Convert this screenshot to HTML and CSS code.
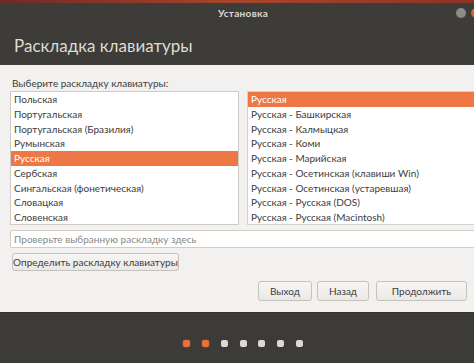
FILE: index.html
```html
<!DOCTYPE html>
<html lang="ru">
<head>
<meta charset="utf-8">
<title>Установка</title>
<link rel="stylesheet" href="styles.css">
</head>
<body>
<div class="desk-strip"></div>
<div class="window">
  <div class="titlebar">
    <div></div>
    <div class="win-title">Установка</div>
    <div class="controls"><span class="ctl ctl-min"></span><span class="ctl ctl-close"></span></div>
  </div>
  <div class="header">Раскладка клавиатуры</div>
  <div class="content">
    <div class="prompt">Выберите раскладку клавиатуры:</div>
    <div class="lists">
      <ul class="list">
        <li>Польская</li>
        <li>Португальская</li>
        <li>Португальская (Бразилия)</li>
        <li>Румынская</li>
        <li class="sel">Русская</li>
        <li>Сербская</li>
        <li>Сингальская (фонетическая)</li>
        <li>Словацкая</li>
        <li>Словенская</li>
      </ul>
      <ul class="list list-right">
        <li class="sel">Русская</li>
        <li>Русская - Башкирская</li>
        <li>Русская - Калмыцкая</li>
        <li>Русская - Коми</li>
        <li>Русская - Марийская</li>
        <li>Русская - Осетинская (клавиши Win)</li>
        <li>Русская - Осетинская (устаревшая)</li>
        <li>Русская - Русская (DOS)</li>
        <li>Русская - Русская (Macintosh)</li>
      </ul>
    </div>
    <input class="test-input" type="text" placeholder="Проверьте выбранную раскладку здесь">
    <div class="detect-row"><button class="btn btn-detect">Определить раскладку клавиатуры</button></div>
    <div class="actions">
      <button class="btn btn-quit">Выход</button>
      <button class="btn btn-back">Назад</button>
      <button class="btn btn-next">Продолжить</button>
    </div>
  </div>
  <div class="footer">
    <span class="dot on"></span><span class="dot on"></span><span class="dot"></span><span class="dot"></span><span class="dot"></span><span class="dot"></span><span class="dot"></span>
  </div>
</div>
</body>
</html>
```
FILE: styles.css
```css
* { box-sizing: border-box; }
html, body { margin: 0; padding: 0; }
body {
  width: 474px;
  height: 363px;
  overflow: hidden;
  font-family: Lato, "Noto Sans", sans-serif;
  font-size: 10px;
  color: #3c3c3c;
  background: #3c3b37;
}
.desk-strip {
  height: 3px;
  background: linear-gradient(90deg, #6e2a25, #a8452c 50%, #8c3326);
}
.window {
  display: flex;
  flex-direction: column;
  height: 360px;
}
.titlebar {
  height: 19px;
  display: grid;
  grid-template-columns: 1fr auto 1fr;
  align-items: center;
  background: #3d3c38;
  padding-left: 12px;
}
.win-title {
  color: #dcd8d0;
  font-weight: bold;
  font-size: 10px;
  letter-spacing: 0.3px;
}
.controls {
  display: flex;
  justify-content: flex-end;
  align-items: center;
  gap: 5px;
  margin-right: -7px;
}
.ctl {
  width: 10px;
  height: 10px;
  border-radius: 50%;
  display: block;
}
.ctl-min { background: #8d8b86; }
.ctl-close { background: #e2602e; }
.header {
  height: 43px;
  background: #3d3c38;
  color: #dedbd4;
  font-size: 17px;
  padding-left: 14px;
  display: flex;
  align-items: center;
  padding-top: 3px;
}
.content {
  height: 247px;
  background: #f2f1f0;
  padding-left: 10px;
  display: flex;
  flex-direction: column;
}
.prompt {
  padding-left: 2px;
  margin-top: 10px;
  height: 16px;
  line-height: 16px;
}
.lists {
  display: grid;
  grid-template-columns: 229px 232px;
  column-gap: 8px;
}
.list {
  list-style: none;
  margin: 0;
  padding: 0;
  height: 134px;
  background: #fff;
  border: 1px solid #cfccc8;
  overflow: hidden;
}
.list li {
  height: 14.75px;
  line-height: 14.75px;
  padding-left: 3px;
  white-space: nowrap;
}
.list li.sel {
  background: #ed7845;
  color: #fff;
}
.list-right { border-color: #d6d3cf; }
.test-input {
  margin-top: 5px;
  width: 470px;
  height: 18px;
  border: 1px solid #d0cdc9;
  border-radius: 2px;
  background: #fff;
  font: inherit;
  padding: 0 0 0 3px;
  color: #3c3c3c;
}
.test-input::placeholder { color: #8a8884; }
.detect-row {
  margin-top: 5px;
  padding-left: 2px;
  display: flex;
}
.btn {
  font: inherit;
  color: #3c3c3c;
  background: linear-gradient(#f7f6f5, #ebe9e6);
  border: 1px solid #c5c1bc;
  border-radius: 3px;
  padding: 0;
}
.btn-detect {
  height: 18px;
  width: 167px;
}
.actions {
  margin-top: 10px;
  display: flex;
  justify-content: flex-end;
  padding-right: 7px;
  gap: 5px;
}
.actions .btn { height: 20px; }
.btn-quit { width: 54px; }
.btn-back { width: 52px; margin-right: 2px; }
.btn-next { width: 91px; }
.footer {
  flex: 1;
  background: #3c3b37;
  display: flex;
  justify-content: center;
  align-items: center;
  gap: 11.7px;
  padding-top: 11px;
  padding-left: 12px;
  border-top: 1px solid #34332f;
}
.dot {
  width: 7px;
  height: 7px;
  border-radius: 2px;
  background: #dcdad6;
}
.dot.on {
  background: #e9733d;
  box-shadow: 0 0 2px #b3502a;
}
```
